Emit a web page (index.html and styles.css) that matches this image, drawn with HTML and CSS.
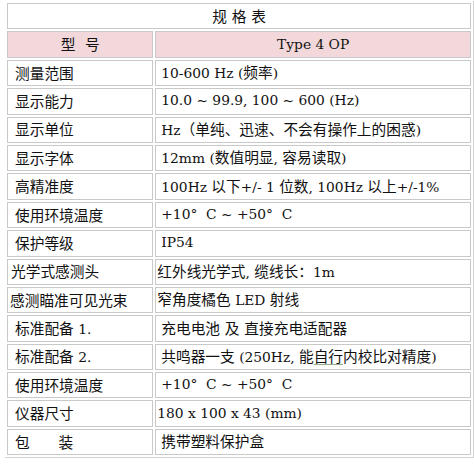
FILE: index.html
```html
<!DOCTYPE html>
<html lang="zh-CN">
<head>
<meta charset="utf-8">
<title>规格表</title>
<link rel="stylesheet" href="styles.css">
</head>
<body>
<table class="spec">
  <tr><td class="title z" colspan="2">规 格 表</td></tr>
  <tr class="head"><td class="k c z">型&nbsp;&nbsp;号</td><td class="v c">Type 4 OP</td></tr>
  <tr><td class="k z">测量范围</td><td class="v">10-600 Hz (<span class="z">频率</span>)</td></tr>
  <tr><td class="k z">显示能力</td><td class="v">10.0 ~ 99.9, 100 ~ 600 (Hz)</td></tr>
  <tr><td class="k z">显示单位</td><td class="v">Hz<span class="z">（单纯、迅速、不会有操作上的困惑</span>)</td></tr>
  <tr><td class="k z">显示字体</td><td class="v">12mm (<span class="z">数值明显</span>, <span class="z">容易读取</span>)</td></tr>
  <tr><td class="k z">高精准度</td><td class="v">100Hz <span class="z">以下</span>+/- 1 <span class="z">位数</span>, 100Hz <span class="z">以上</span>+/-1%</td></tr>
  <tr><td class="k z">使用环境温度</td><td class="v">+10°&nbsp; C ~ +50°&nbsp; C</td></tr>
  <tr><td class="k z">保护等级</td><td class="v">IP54</td></tr>
  <tr><td class="k z tight">光学式感测头</td><td class="v tight"><span class="z">红外线光学式</span>, <span class="z">缆线长：</span>1m</td></tr>
  <tr><td class="k z tighter">感测瞄准可见光束</td><td class="v tight"><span class="z">窄角度橘色</span> LED <span class="z">射线</span></td></tr>
  <tr><td class="k"><span class="z">标准配备</span> 1.</td><td class="v"><span class="z">充电电池 及 直接充电适配器</span></td></tr>
  <tr><td class="k"><span class="z">标准配备</span> 2.</td><td class="v"><span class="z">共鸣器一支</span> (250Hz, <span class="z">能<span class="mark">自行</span>内校比对精度</span>)</td></tr>
  <tr><td class="k z">使用环境温度</td><td class="v">+10°&nbsp; C ~ +50°&nbsp; C</td></tr>
  <tr><td class="k z">仪器尺寸</td><td class="v tight">180 x 100 x 43 (mm)</td></tr>
  <tr><td class="k z">包&nbsp;&nbsp;&nbsp;&nbsp;&nbsp;&nbsp;装</td><td class="v"><span class="z">携带塑料保护盒</span></td></tr>
</table>
</body>
</html>
```

FILE: styles.css
```css
html, body {
  margin: 0;
  padding: 0;
  background: #ffffff;
}

body {
  font-family: "DejaVu Serif", "Noto Sans CJK SC", serif;
  font-size: 13.8px;
  color: #111111;
}

.z {
  font-family: "Noto Sans CJK SC", "Noto Sans CJK JP", sans-serif;
  font-size: 14.7px;
  word-spacing: 1.5px;
}

.spec {
  margin: 1px 0 0 5px;
  border-collapse: separate;
  border-spacing: 2px;
  border-right: 1px solid #d2d2d2;
  border-bottom: 1px solid #d2d2d2;
}

.spec td {
  border: 1px solid #c9c9c9;
  height: 24.4px;
  padding: 0;
  vertical-align: middle;
  white-space: nowrap;
  line-height: 1;
}

.title {
  text-align: center;
  background: #ffffff;
}

.head td {
  background: #f2d8da;
}

.k {
  width: 140px;
  padding-left: 7px !important;
}

.v {
  width: 312px;
  padding-left: 5px !important;
}

.c {
  text-align: center;
  padding-left: 0 !important;
}

.k.tight {
  padding-left: 3px !important;
}

.k.tighter {
  padding-left: 2px !important;
}

.v.tight {
  padding-left: 1px !important;
}

.mark {
  text-decoration: underline;
  text-decoration-color: #8fb08a;
  text-underline-offset: 2px;
}
```
